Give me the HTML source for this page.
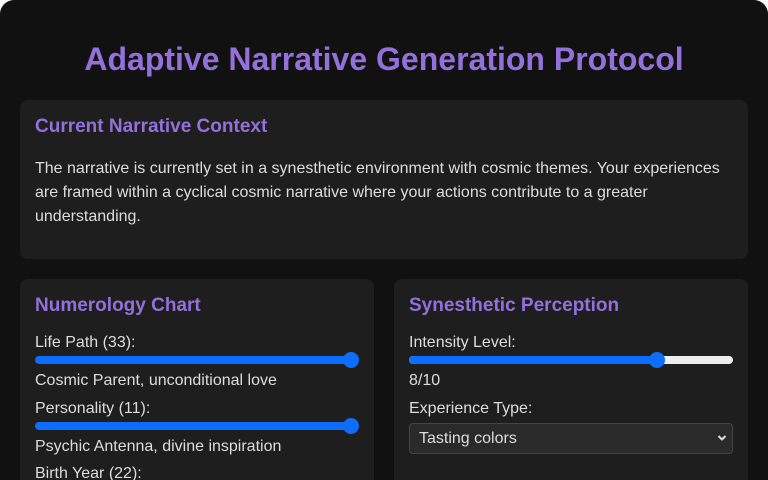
<!DOCTYPE html>
<html><head><meta charset="utf-8"><style>
html,body{margin:0;padding:0;background:#fff;width:768px;height:480px;overflow:hidden}
body{font-family:"Liberation Sans",sans-serif;color:#ddd;position:relative}
.wrap{position:absolute;left:0;top:0;width:768px;height:480px;background:#111;border-radius:14px 14px 0 0;overflow:hidden}
h1{position:absolute;left:0;width:768px;top:40px;margin:0;text-align:center;font-size:32px;line-height:38px;color:#9370db;font-weight:bold}
.card{position:absolute;background:#1e1e1e;border-radius:8px}
h2{position:absolute;margin:0;font-size:19px;line-height:24px;color:#9370db;font-weight:bold;white-space:nowrap}
.t{position:absolute;font-size:16px;line-height:24px;color:#ddd;white-space:nowrap}
.trk{position:absolute;height:8px;border-radius:4px;background:#0d6efd}
.th{position:absolute;width:16px;height:16px;border-radius:50%;background:#0d6efd}
.sel{position:absolute;left:409px;top:423px;width:322px;height:29px;background:#2a2a2a;border:1px solid #444;border-radius:4px}
</style></head><body><div class="wrap">
<h1>Adaptive Narrative Generation Protocol</h1>
<div class="card" style="left:20px;top:100px;width:728px;height:159px"></div>
<h2 style="left:35px;top:115px">Current Narrative Context</h2>
<div class="t" style="left:35px;top:157px;white-space:normal;width:700px">The narrative is currently set in a synesthetic environment with cosmic themes. Your experiences are framed within a cyclical cosmic narrative where your actions contribute to a greater understanding.</div>
<div class="card" style="left:20px;top:279px;width:354px;height:220px"></div>
<div class="card" style="left:394px;top:279px;width:354px;height:220px"></div>
<h2 style="left:35px;top:294px">Numerology Chart</h2>
<div class="t" style="left:35px;top:331px">Life Path (33):</div>
<div class="trk" style="left:35px;top:356px;width:322px"></div><div class="th" style="left:343px;top:352px"></div>
<div class="t" style="left:35px;top:369px">Cosmic Parent, unconditional love</div>
<div class="t" style="left:35px;top:397px">Personality (11):</div>
<div class="trk" style="left:35px;top:422px;width:322px"></div><div class="th" style="left:343px;top:418px"></div>
<div class="t" style="left:35px;top:435px">Psychic Antenna, divine inspiration</div>
<div class="t" style="left:35px;top:462px">Birth Year (22):</div>
<h2 style="left:409px;top:294px">Synesthetic Perception</h2>
<div class="t" style="left:409px;top:331px">Intensity Level:</div>
<div class="trk" style="left:409px;top:356px;width:324px;background:#eee"></div>
<div class="trk" style="left:409px;top:356px;width:250px"></div><div class="th" style="left:649px;top:352px"></div>
<div class="t" style="left:409px;top:369px">8/10</div>
<div class="t" style="left:409px;top:397px">Experience Type:</div>
<div class="sel"></div>
<div class="t" style="left:419px;top:427px">Tasting colors</div>
<svg style="position:absolute;left:717px;top:434px" width="10" height="8" viewBox="0 0 10 8"><path d="M1.5 2 L5 5.5 L8.5 2" stroke="#ddd" stroke-width="2" fill="none"/></svg>
</div></body></html>
